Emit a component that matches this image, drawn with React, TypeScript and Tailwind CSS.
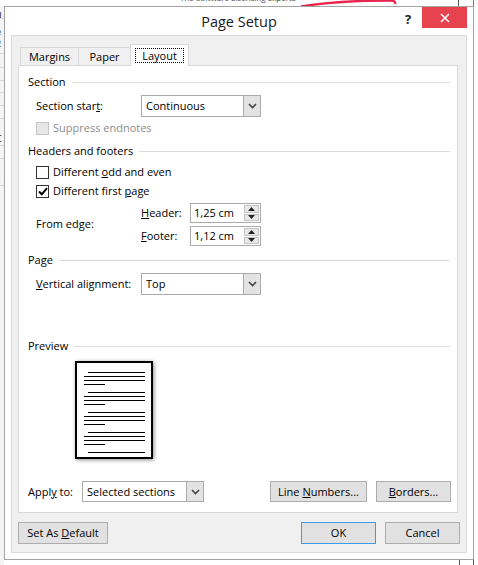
import React from "react";

function Chevron() {
  return (
    <svg width="9" height="6" viewBox="0 0 9 6">
      <path d="M1 1 L4.5 4.5 L8 1" fill="none" stroke="#444" strokeWidth="1.6" />
    </svg>
  );
}

function Select({ value, w }: { value: string; w: string }) {
  return (
    <div className={`flex h-[22px] ${w} border border-[#ababab] bg-white`}>
      <div className="flex-1 flex items-center pl-[4px] text-black">{value}</div>
      <div className="w-[17px] flex items-center justify-center bg-[#e3e3e3] border-l border-[#ababab]">
        <Chevron />
      </div>
    </div>
  );
}

function Spin({ value }: { value: string }) {
  return (
    <div className="flex h-[20px] w-[71px] border border-[#ababab] bg-white">
      <div className="flex-1 flex items-center pl-[3px] text-black">{value}</div>
      <div className="w-[17px] flex flex-col p-px gap-px">
        <div className="flex-1 flex items-center justify-center bg-[#e8e8e8] border border-[#c4c4c4]">
          <svg width="7" height="4" viewBox="0 0 7 4">
            <path d="M0 4 L3.5 0 L7 4 Z" fill="#222" />
          </svg>
        </div>
        <div className="flex-1 flex items-center justify-center bg-[#e8e8e8] border border-[#c4c4c4]">
          <svg width="7" height="4" viewBox="0 0 7 4">
            <path d="M0 0 L3.5 4 L7 0 Z" fill="#222" />
          </svg>
        </div>
      </div>
    </div>
  );
}

function Check({ checked, disabled }: { checked?: boolean; disabled?: boolean }) {
  return (
    <div
      className={`w-[13px] h-[13px] flex items-center justify-center border ${
        disabled ? "border-[#c6c6c6] bg-[#e6e6e6]" : "border-[#333333] bg-white"
      }`}
    >
      {checked && (
        <svg width="10" height="9" viewBox="0 0 10 9">
          <path d="M1 4.5 L3.8 7.3 L9 1.2" fill="none" stroke="#000" strokeWidth="2" />
        </svg>
      )}
    </div>
  );
}

function Group({ label }: { label: string }) {
  return (
    <div className="flex items-center h-[16px]">
      <span className="text-black">{label}</span>
      <div className="flex-1 h-px bg-[#dcdcdc] ml-[6px]" />
    </div>
  );
}

function Btn({ children, w, focus }: { children: React.ReactNode; w: string; focus?: boolean }) {
  return (
    <div
      className={`${w} flex items-center justify-center bg-[#e1e1e1] border ${
        focus ? "border-[#3c9be6]" : "border-[#adadad]"
      } text-black`}
    >
      <span className="whitespace-pre">{children}</span>
    </div>
  );
}

const Line = ({ w, ml }: { w: string; ml?: string }) => <div className={`h-px bg-black ${w} ${ml ?? ""}`} />;

function Para({ first }: { first?: boolean }) {
  return (
    <div className={`flex flex-col gap-[3px] ${first ? "" : "mt-[7px]"}`}>
      <Line w="w-[57px]" ml="ml-[4px]" />
      <Line w="w-[61px]" />
      <Line w="w-[61px]" />
      <Line w="w-[21px]" />
    </div>
  );
}

export default function App() {
  return (
    <div className="relative w-[478px] h-[565px] bg-white overflow-hidden font-['Open_Sans','Noto_Sans',sans-serif] text-[11px] leading-[16px]">
      {/* background behind the dialog */}
      <div className="absolute left-[180px] top-[-7px] text-[8px] leading-[10px] text-[#444] whitespace-nowrap">
        The Software Licensing Experts
      </div>
      <svg className="absolute left-[298px] top-0" width="104" height="8" viewBox="0 0 104 8">
        <path d="M3 6.5 C 25 3, 50 0.5, 92 0.5 Q 98 0.5 97 4" fill="none" stroke="#e8244c" strokeWidth="2.4" />
      </svg>
      <div className="absolute left-[458px] top-0 w-px h-[6px] bg-[#555]" />
      <div className="absolute left-[473px] top-0 w-px h-[6px] bg-[#777]" />
      <div className="absolute left-[459px] top-[559px] w-px h-[6px] bg-[#555]" />
      <div className="absolute left-[473px] top-[559px] w-px h-[6px] bg-[#555]" />
      <div className="absolute left-0 top-[6px] w-[4px] h-[559px] bg-[#f4f4f4]" />
      <div className="absolute left-[-4px] top-[11px] text-[9px] leading-[9px] text-[#222]">d</div>
      <div className="absolute left-[-4px] top-[27px] text-[9px] leading-[9px] text-[#222]">e</div>
      <div className="absolute left-[-4px] top-[39px] text-[9px] leading-[9px] text-[#222]">2</div>
      <div className="absolute left-[-4px] top-[134px] text-[9px] leading-[9px] text-[#222]">C</div>
      <div className="absolute left-[-2px] top-[174px] text-[9px] leading-[9px] text-[#222]">:</div>
      {[18, 53, 67, 80, 92, 105, 118, 145, 158, 185].map((y) => (
        <div key={y} className="absolute left-0 w-[4px] h-px bg-[#d6d6d6]" style={{ top: y }} />
      ))}

      {/* dialog window */}
      <div className="absolute left-[4px] top-[6px] w-[470px] h-[554px] border border-[#a3a3a3] bg-white flex flex-col">
        {/* title bar */}
        <div className="relative h-[28px] flex items-center justify-center">
          <span className="text-[14.5px] leading-[20px] text-[#1a1a1a] mt-[1px]">Page Setup</span>
          <span className="absolute left-[400px] top-[4px] text-[13px] font-bold text-[#222]">?</span>
          <div className="absolute left-[417px] top-0 w-[45px] h-[21px] bg-[#e6434f] flex items-center justify-center">
            <svg width="10" height="10" viewBox="0 0 10 10">
              <path d="M1 1 L9 9 M9 1 L1 9" stroke="#fff" strokeWidth="1.5" />
            </svg>
          </div>
        </div>

        {/* inner grey area */}
        <div className="mx-[6px] h-[518px] border border-[#dadada] bg-[#f0f0f0] flex flex-col pt-[8px]">
          {/* tabs */}
          <div className="flex items-end h-[21px] ml-[8px] relative z-10">
            <div className="w-[59px] h-[18px] border border-b-0 border-[#d9d9d9] bg-[#f0f0f0] flex items-center justify-center text-black">
              Margins
            </div>
            <div className="-ml-px w-[53px] h-[18px] border border-b-0 border-[#d9d9d9] bg-[#f0f0f0] flex items-center justify-center text-black">
              Paper
            </div>
            <div className="-ml-px w-[59px] h-[22px] -mb-px border border-b-0 border-[#d9d9d9] bg-white flex items-center justify-center">
              <span className="border border-dotted border-black px-[6px] leading-[13px] text-black">Layout</span>
            </div>
          </div>

          {/* panel */}
          <div className="ml-[6px] w-[440px] h-[448px] border border-[#d9d9d9] bg-white pl-[9px] pr-[7px] flex flex-col">
            <div className="mt-[8px]">
              <Group label="Section" />
            </div>
            <div className="mt-[5px] ml-[8px] flex items-center">
              <span className="w-[105px] text-black">
                Section star<u>t</u>:
              </span>
              <Select value="Continuous" w="w-[120px]" />
            </div>
            <div className="mt-[3px] ml-[8px] flex items-center h-[16px] gap-[4px]">
              <Check disabled />
              <span className="text-[#8d8d8d]">Suppress endnotes</span>
            </div>

            <div className="mt-[7px]">
              <Group label="Headers and footers" />
            </div>
            <div className="mt-[5px] ml-[8px] flex items-center h-[16px] gap-[4px]">
              <Check />
              <span className="text-black">
                Different <u>o</u>dd and even
              </span>
            </div>
            <div className="mt-[3px] ml-[8px] flex items-center h-[16px] gap-[4px]">
              <Check checked />
              <span className="text-black">
                Different first <u>p</u>age
              </span>
            </div>
            <div className="mt-[4px] ml-[8px] flex">
              <div className="w-[105px] flex items-center pb-[2px] text-black">From edge:</div>
              <div className="flex flex-col gap-[3px]">
                <div className="flex items-center">
                  <span className="w-[49px] text-black">
                    <u>H</u>eader:
                  </span>
                  <Spin value="1,25 cm" />
                </div>
                <div className="flex items-center">
                  <span className="w-[49px] text-black">
                    <u>F</u>ooter:
                  </span>
                  <Spin value="1,12 cm" />
                </div>
              </div>
            </div>

            <div className="mt-[6px]">
              <Group label="Page" />
            </div>
            <div className="mt-[5px] ml-[8px] flex items-center">
              <span className="w-[105px] text-black">
                <u>V</u>ertical alignment:
              </span>
              <Select value="Top" w="w-[120px]" />
            </div>

            <div className="mt-[43px]">
              <Group label="Preview" />
            </div>
            <div className="mt-[7px] ml-[47px] w-[78px] h-[98px] border-2 border-black bg-white shadow-[1px_1px_4px_rgba(0,0,0,0.45)] pt-[9px] pl-[7px] flex flex-col">
              <Para first />
              <Para />
              <Para />
              <Para />
              <div className="mt-[7px]">
                <Line w="w-[57px]" ml="ml-[4px]" />
              </div>
            </div>

            <div className="mt-[22px] flex items-center h-[21px]">
              <span className="w-[54px] text-black">
                Appl<u>y</u> to:
              </span>
              <Select value="Selected sections" w="w-[122px] !h-[21px]" />
              <div className="ml-auto flex gap-[9px] h-[21px] mr-[-1px]">
                <Btn w="w-[97px]">
                  Line <u>N</u>umbers...
                </Btn>
                <Btn w="w-[75px]">
                  <u>B</u>orders...
                </Btn>
              </div>
            </div>
          </div>

          {/* bottom buttons */}
          <div className="mt-[9px] px-[6px] flex h-[22px]">
            <Btn w="w-[90px]">
              Set As <u>D</u>efault
            </Btn>
            <div className="ml-auto flex gap-[9px]">
              <Btn w="w-[75px]" focus>
                OK
              </Btn>
              <Btn w="w-[75px]">Cancel</Btn>
            </div>
          </div>
        </div>
      </div>
    </div>
  );
}
